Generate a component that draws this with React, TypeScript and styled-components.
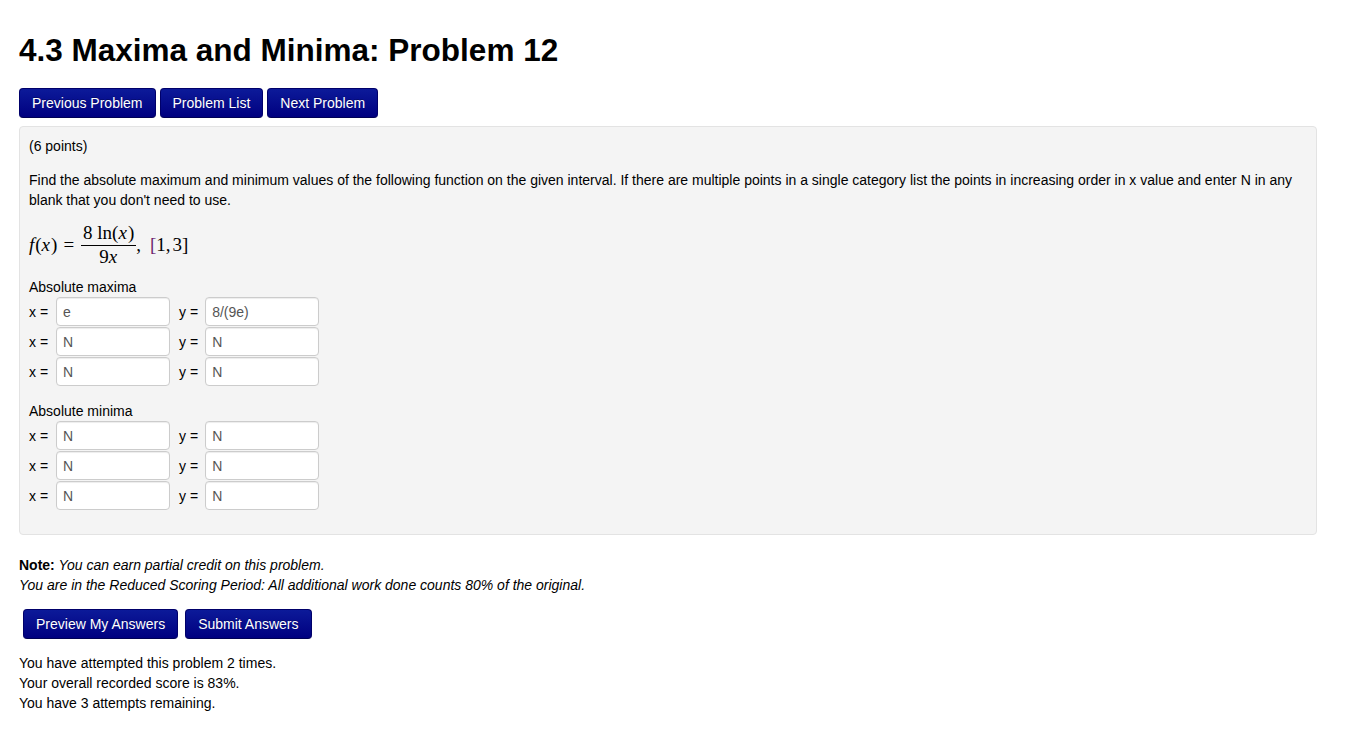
import React from "react";
import styled, { createGlobalStyle } from "styled-components";

const GlobalStyle = createGlobalStyle`
  html, body {
    margin: 0;
    padding: 0;
    background: #fff;
  }
  body {
    font-family: "Liberation Sans", Arial, Helvetica, sans-serif;
    font-size: 14px;
    line-height: 20px;
    color: #000;
  }
`;

const Page = styled.div`
  padding: 30px 0 40px 19px;
`;

const Title = styled.h2`
  margin: 0 0 18px;
  font-size: 31.5px;
  line-height: 40px;
  font-weight: bold;
  color: #000;
`;

const ButtonRow = styled.div<{ $gap: number; $indent?: number }>`
  display: flex;
  gap: ${(p) => p.$gap}px;
  padding-left: ${(p) => p.$indent ?? 0}px;
`;

const NavButton = styled.button`
  height: 30px;
  padding: 0 12px;
  font-family: inherit;
  font-size: 14px;
  line-height: 20px;
  color: #fff;
  background: linear-gradient(to bottom, #0c1a99, #000080);
  border: 1px solid #00006a;
  border-bottom-color: #000055;
  border-radius: 4px;
  text-shadow: 0 -1px 0 rgba(0, 0, 0, 0.25);
  cursor: pointer;
`;

const Well = styled.div`
  box-sizing: border-box;
  width: 1298px;
  margin-top: 8px;
  padding: 9px 9px 23px;
  background: #f4f4f4;
  border: 1px solid #e3e3e3;
  border-radius: 4px;
`;

const Text = styled.div<{ $top?: number }>`
  margin-top: ${(p) => p.$top ?? 0}px;
`;

const Formula = styled.div`
  height: 44px;
  margin: 12px 0 11px;
  display: flex;
  align-items: center;
  font-family: "Liberation Serif", "Times New Roman", serif;
  font-size: 19px;
  line-height: 19px;
  color: #000;
`;

const Var = styled.i`
  font-style: italic;
  padding-right: 1px;
`;

const Op = styled.span`
  margin: 0 7px 0 6px;
`;

const Frac = styled.span`
  display: inline-flex;
  flex-direction: column;
  align-items: center;
  margin-top: 1px;
`;

const Num = styled.span`
  padding: 0 2px 3px;
  border-bottom: 1px solid #000;
`;

const Den = styled.span`
  padding-top: 1px;
`;

const Sep = styled.span<{ $space: number }>`
  margin-right: ${(p) => p.$space}px;
`;

const Bracket = styled.span<{ $purple?: boolean }>`
  color: ${(p) => (p.$purple ? "#6e1f6e" : "#000")};
`;

const Row = styled.div`
  display: flex;
  align-items: center;
  height: 30px;
`;

const Label = styled.span<{ $gap: number }>`
  margin-left: ${(p) => p.$gap}px;
`;

const Input = styled.input<{ $gap: number }>`
  box-sizing: border-box;
  width: 114px;
  height: 29px;
  margin: 0 0 1px ${(p) => p.$gap}px;
  padding: 4px 6px;
  font-family: inherit;
  font-size: 14px;
  line-height: 20px;
  color: #555;
  background: #fff;
  border: 1px solid #ccc;
  border-radius: 4px;
  box-shadow: inset 0 1px 1px rgba(0, 0, 0, 0.075);
  outline: none;
`;

const Note = styled.div`
  margin-top: 20px;
  font-style: italic;
  b {
    font-style: normal;
  }
`;

const Status = styled.div`
  margin-top: 14px;
`;

const AnswerRows: React.FC<{ rows: [string, string][] }> = ({ rows }) => (
  <>
    {rows.map(([x, y], i) => (
      <Row key={i}>
        <Label $gap={0}>x =</Label>
        <Input $gap={8} defaultValue={x} />
        <Label $gap={9}>y =</Label>
        <Input $gap={7} defaultValue={y} />
      </Row>
    ))}
  </>
);

export default function App() {
  return (
    <>
      <GlobalStyle />
      <Page>
        <Title>4.3 Maxima and Minima: Problem 12</Title>
        <ButtonRow $gap={4}>
          <NavButton>Previous Problem</NavButton>
          <NavButton>Problem List</NavButton>
          <NavButton>Next Problem</NavButton>
        </ButtonRow>

        <Well>
          <Text>(6 points)</Text>
          <Text $top={14}>
            Find the absolute maximum and minimum values of the following function on the given
            interval. If there are multiple points in a single category list the points in
            increasing order in x value and enter N in any blank that you don't need to use.
          </Text>
          <Formula>
            <Var>f</Var>(<Var>x</Var>)<Op>=</Op>
            <Frac>
              <Num>
                8 ln(<Var>x</Var>)
              </Num>
              <Den>
                9<Var>x</Var>
              </Den>
            </Frac>
            <Sep $space={9}>,</Sep>
            <Bracket $purple>[</Bracket>1<Sep $space={2}>,</Sep>3<Bracket>]</Bracket>
          </Formula>
          <Text>Absolute maxima</Text>
          <AnswerRows
            rows={[
              ["e", "8/(9e)"],
              ["N", "N"],
              ["N", "N"],
            ]}
          />
          <Text $top={14}>Absolute minima</Text>
          <AnswerRows
            rows={[
              ["N", "N"],
              ["N", "N"],
              ["N", "N"],
            ]}
          />
        </Well>

        <Note>
          <b>Note:</b> You can earn partial credit on this problem.
          <br />
          You are in the Reduced Scoring Period: All additional work done counts 80% of the
          original.
        </Note>
        <Status>
          <ButtonRow $gap={7} $indent={4}>
            <NavButton>Preview My Answers</NavButton>
            <NavButton>Submit Answers</NavButton>
          </ButtonRow>
        </Status>
        <Status>
          You have attempted this problem 2 times.
          <br />
          Your overall recorded score is 83%.
          <br />
          You have 3 attempts remaining.
        </Status>
      </Page>
    </>
  );
}
